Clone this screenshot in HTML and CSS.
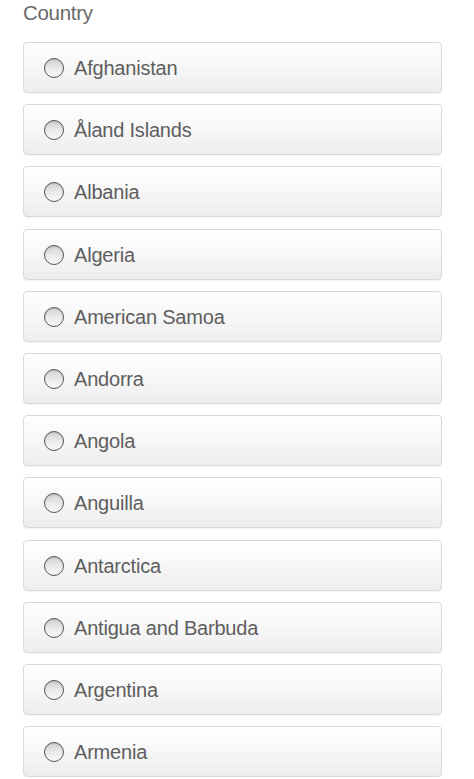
FILE: index.html
```html
<!DOCTYPE html>
<html>
<head>
<meta charset="utf-8">
<link rel="stylesheet" href="styles.css">
</head>
<body>
<div class="field">
  <div class="legend">Country</div>
  <div class="options">
    <label class="option"><span class="radio"></span><span class="name">Afghanistan</span></label>
    <label class="option"><span class="radio"></span><span class="name">Åland Islands</span></label>
    <label class="option"><span class="radio"></span><span class="name">Albania</span></label>
    <label class="option"><span class="radio"></span><span class="name">Algeria</span></label>
    <label class="option"><span class="radio"></span><span class="name">American Samoa</span></label>
    <label class="option"><span class="radio"></span><span class="name">Andorra</span></label>
    <label class="option"><span class="radio"></span><span class="name">Angola</span></label>
    <label class="option"><span class="radio"></span><span class="name">Anguilla</span></label>
    <label class="option"><span class="radio"></span><span class="name">Antarctica</span></label>
    <label class="option"><span class="radio"></span><span class="name">Antigua and Barbuda</span></label>
    <label class="option"><span class="radio"></span><span class="name">Argentina</span></label>
    <label class="option"><span class="radio"></span><span class="name">Armenia</span></label>
  </div>
</div>
</body>
</html>
```
FILE: styles.css
```css
html, body {
  margin: 0;
  padding: 0;
  background: #ffffff;
}
body {
  font-family: "Liberation Sans", Arial, sans-serif;
  color: #5e5e5e;
  overflow: hidden;
}
.field {
  padding: 0 32px 0 23px;
}
.legend {
  font-size: 20.5px;
  line-height: 26px;
  letter-spacing: -0.3px;
  color: #6a6a6a;
  height: 42px;
}
.options {
  display: flex;
  flex-direction: column;
  gap: 11.2px;
}
.option {
  display: flex;
  align-items: center;
  gap: 10px;
  box-sizing: border-box;
  height: 51px;
  padding: 1px 19px 0 20px;
  border: 1px solid #d9d9d9;
  border-radius: 4px;
  background: linear-gradient(to bottom, #ffffff 0%, #f7f7f7 50%, #ededed 100%);
  box-shadow: 0 1px 1px rgba(0, 0, 0, 0.04);
}
.radio {
  flex: none;
  box-sizing: border-box;
  width: 20px;
  height: 20px;
  border-radius: 50%;
  border: 1.7px solid #555555;
  background: linear-gradient(to bottom, #d2d2d2 0%, #ebebeb 55%, #f9f9f9 100%);
  box-shadow: inset 0 1px 1px rgba(0, 0, 0, 0.12);
}
.name {
  font-size: 20px;
  letter-spacing: -0.2px;
  line-height: 24px;
  color: #5e5e5e;
}
```
